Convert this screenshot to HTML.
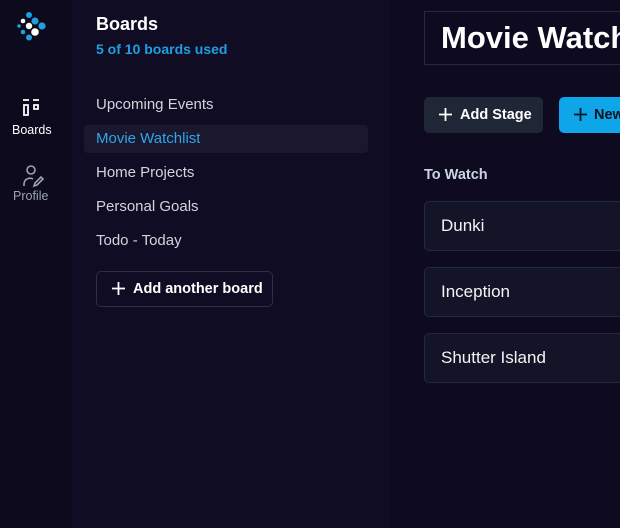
<!DOCTYPE html>
<html><head><style>
*{margin:0;padding:0;box-sizing:border-box}
html,body{width:620px;height:528px;overflow:hidden}
body{background:#0e0a20;font-family:"Liberation Sans",sans-serif;position:relative;color:#e5e7eb}
.side{position:absolute;left:0;top:0;width:72px;height:528px;background:#0c0a1c}
.mid{position:absolute;left:72px;top:0;width:318px;height:528px;background:#100c24}
.t{position:absolute;white-space:nowrap;overflow:hidden}
.item{position:absolute;left:96px;font-size:15px;color:#d1d5db}
.card{position:absolute;left:424px;width:196px;height:50px;background:#141429;border:1px solid #232a3b;border-right:none;border-radius:5px 0 0 5px;font-size:17px;color:#f3f4f6;padding:14px 16px}
</style></head><body>
<div class="side"></div>
<div class="mid"></div>
<svg class="t" style="left:16px;top:12px" width="32" height="30" viewBox="16 12 32 30">
<circle cx="29" cy="15" r="3" fill="#1ea0e0"/>
<circle cx="23" cy="21" r="2.3" fill="#fff"/>
<circle cx="35" cy="21" r="3.5" fill="#1ea0e0"/>
<circle cx="19" cy="26" r="1.8" fill="#1ea0e0"/>
<circle cx="29" cy="26" r="3.2" fill="#fff"/>
<circle cx="42" cy="26" r="3.6" fill="#1ea0e0"/>
<circle cx="23" cy="32" r="2.3" fill="#1ea0e0"/>
<circle cx="35" cy="32" r="3.8" fill="#fff"/>
<circle cx="29" cy="37.5" r="3" fill="#1ea0e0"/>
</svg>
<svg class="t" style="left:22px;top:99px" width="20" height="18" viewBox="0 0 20 18" fill="none" stroke="#fff" stroke-width="1.8">
<path d="M1 1h6M11 1h6M2 6h4v10H2zM12 6h4v4h-4z"/></svg>
<div class="t" style="left:12px;top:123px;font-size:12.5px;color:#fff">Boards</div>
<svg class="t" style="left:23px;top:164px" width="22" height="24" viewBox="0 0 22 24" fill="none" stroke="#9ca3af" stroke-width="1.6">
<circle cx="8" cy="6" r="4"/><path d="M1 22v-2a6 6 0 0 1 9-5"/><path d="M11 22l1-3 6-6 2 2-6 6z"/></svg>
<div class="t" style="left:13px;top:189px;font-size:12.5px;color:#9ca3af">Profile</div>

<div class="t" style="left:96px;top:14px;font-size:18px;font-weight:bold;color:#fff">Boards</div>
<div class="t" style="left:96px;top:41px;font-size:14px;font-weight:bold;color:#1ea0e0">5 of 10 boards used</div>
<div class="t item" style="top:96px">Upcoming Events</div>
<div class="t" style="left:84px;top:125px;width:284px;height:28px;background:#1a172e;border-radius:4px"></div>
<div class="t item" style="top:130px;color:#30a6e8">Movie Watchlist</div>
<div class="t item" style="top:164px">Home Projects</div>
<div class="t item" style="top:198px">Personal Goals</div>
<div class="t item" style="top:232px">Todo - Today</div>
<div class="t" style="left:96px;top:271px;width:177px;height:36px;border:1px solid #2a3142;border-radius:5px;font-size:14.5px;font-weight:bold;color:#fff;padding:9px 0 0 36px">Add another board</div>
<svg class="t" style="left:112px;top:282px" width="13" height="13" stroke="#fff" stroke-width="1.8"><path d="M6.5 0v13M0 6.5h13"/></svg>

<div class="t" style="left:424px;top:11px;width:196px;height:54px;border:1px solid #242a3b;border-right:none"></div>
<div class="t" style="left:441px;top:20px;width:179px;font-size:31px;font-weight:bold;color:#fff">Movie Watchlist</div>
<div class="t" style="left:424px;top:97px;width:119px;height:36px;background:#1f2737;border-radius:5px;font-size:14.5px;font-weight:bold;color:#fff;padding:10px 0 0 36px">Add Stage</div>
<svg class="t" style="left:439px;top:108px" width="13" height="13" stroke="#fff" stroke-width="1.8"><path d="M6.5 0v13M0 6.5h13"/></svg>
<div class="t" style="left:559px;top:97px;width:61px;height:36px;background:#0ea5e9;border-radius:5px 0 0 5px;font-size:14.5px;font-weight:bold;color:#0b1220;padding:10px 0 0 35px">New</div>
<svg class="t" style="left:574px;top:108px" width="13" height="13" stroke="#0b1220" stroke-width="1.8"><path d="M6.5 0v13M0 6.5h13"/></svg>
<div class="t" style="left:424px;top:167px;font-size:14.5px;font-weight:bold;color:#cbd5e1">To Watch</div>
<div class="card" style="top:201px">Dunki</div>
<div class="card" style="top:267px">Inception</div>
<div class="card" style="top:333px">Shutter Island</div>
</body></html>
